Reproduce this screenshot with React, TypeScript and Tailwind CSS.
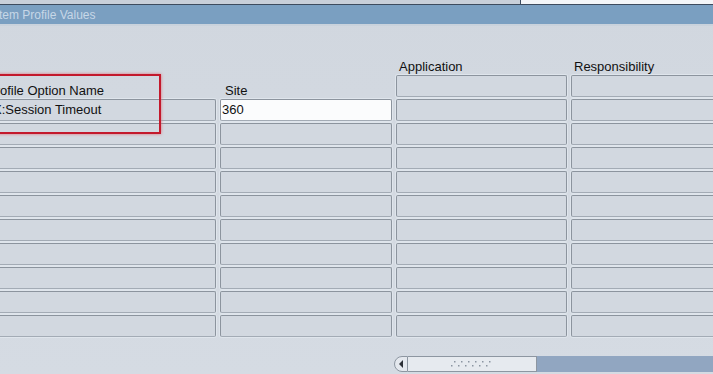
import React from "react";

const Cell = ({ children, white }: { children?: React.ReactNode; white?: boolean }) => (
  <div
    className={`h-[22px] rounded-[2px] border border-[#8c949e] border-b-[#a3abb5] shadow-[0_0_0_1px_#dfe5ec] flex items-center overflow-hidden whitespace-nowrap text-[13px] text-[#111] ${
      white ? "bg-[#fbfcfd]" : "bg-[#d2d8e0]"
    }`}
  >
    {children}
  </div>
);

const Column = ({
  label,
  rows,
  width,
  labelClass,
  first,
}: {
  label: string;
  rows: number;
  width: string;
  labelClass: string;
  first?: React.ReactNode;
}) => (
  <div className={`flex flex-col shrink-0 ${width}`}>
    <div className={`h-[15px] leading-[15px] mb-[1px] text-[13px] text-[#111] whitespace-nowrap ${labelClass}`}>
      {label}
    </div>
    <div className="flex flex-col gap-[2px]">
      {first}
      {Array.from({ length: rows }).map((_, i) => (
        <Cell key={i} />
      ))}
    </div>
  </div>
);

export default function App() {
  return (
    <div
      className="relative w-[713px] h-[374px] overflow-hidden bg-gradient-to-b from-[#d1d7df] to-[#d5dbe3] flex flex-col"
      style={{ fontFamily: '"Liberation Sans", Arial, sans-serif' }}
    >
      {/* top strip of the window behind */}
      <div className="flex h-[5px] border-b border-[#3d4b5e]">
        <div className="flex-1 bg-[#c8cfd9]" />
        <div className="w-[193px] bg-[#f3f5f8] border-l border-[#3d4b5e]" />
      </div>

      {/* title bar */}
      <div className="h-[21px] bg-[#7a9fc1] flex items-center border-b-2 border-[#c9d2dc]">
        <span className="-ml-[21px] text-[12px] text-[#c7d7e7] whitespace-nowrap">System Profile Values</span>
      </div>

      {/* grid of fields */}
      <div className="mt-[33px] -ml-[30px] flex items-end gap-[4px]">
        <Column
          label="Profile Option Name"
          labelClass="pl-[17px]"
          width="w-[246px]"
          rows={9}
          first={
            <Cell>
              <span className="pl-[9px]">ICX:Session Timeout</span>
            </Cell>
          }
        />
        <Column
          label="Site"
          labelClass="pl-[5px]"
          width="w-[172px]"
          rows={9}
          first={
            <Cell white>
              <span className="pl-[1px]">360</span>
            </Cell>
          }
        />
        <Column label="Application" labelClass="pl-[3px]" width="w-[171px]" rows={11} />
        <Column label="Responsibility" labelClass="pl-[3px]" width="w-[200px]" rows={11} />
      </div>

      {/* horizontal scrollbar */}
      <div className="mt-[19px] ml-[394px] flex h-[16px]">
        <div className="w-[14px] h-full rounded-l-[8px] border border-[#8d96a1] bg-[#e4e8ee] flex items-center justify-center">
          <svg width="6" height="8" viewBox="0 0 6 8">
            <path d="M5 0 L1 4 L5 8 Z" fill="#2b2f36" />
          </svg>
        </div>
        <div className="w-[129px] h-full border-y border-r border-[#8d96a1] bg-[#e6eaef] flex items-center justify-center">
          <svg width="44" height="8" viewBox="0 0 44 8">
            {[0, 1, 2, 3, 4, 5].map((i) => (
              <g key={i} fill="#8b95a2">
                <rect x={4 + i * 7} y={1} width="1.5" height="1.5" />
                <rect x={1 + i * 7} y={5} width="1.5" height="1.5" />
              </g>
            ))}
          </svg>
        </div>
        <div className="flex-1 h-full bg-[#91a6c1]" />
      </div>

      {/* red highlight annotation */}
      <div className="absolute -left-[4px] top-[74px] w-[165px] h-[60px] border-2 border-[#c3192c] shadow-[0_0_3px_#e0707a]" />
    </div>
  );
}
